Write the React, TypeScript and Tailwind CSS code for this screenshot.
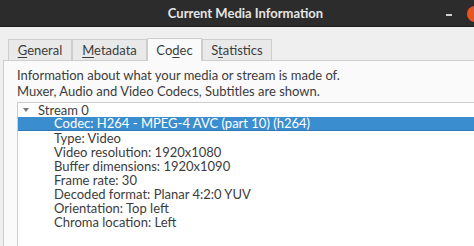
import React from "react";

const font = { fontFamily: 'Lato, "Noto Sans", "DejaVu Sans", sans-serif' };

function Tab({ label, u, w, active }: { label: string; u: number; w: number; active?: boolean }) {
  const before = label.slice(0, u);
  const ch = label[u];
  const after = label.slice(u + 1);
  return (
    <div
      className={
        active
          ? "h-[23px] border border-b-0 border-[#cdcdcd] bg-[#fafafa] flex items-center justify-center text-[#3c3c3c] relative z-10 -mb-px"
          : "h-[21px] border border-b-0 border-[#cdcdcd] bg-[#e9e9e9] flex items-center justify-center text-[#3c3c3c]"
      }
      style={{ width: w }}
    >
      <span>
        {before}
        <u className="underline-offset-2">{ch}</u>
        {after}
      </span>
    </div>
  );
}

export default function App() {
  const rows = [
    "Type: Video",
    "Video resolution: 1920x1080",
    "Buffer dimensions: 1920x1090",
    "Frame rate: 30",
    "Decoded format: Planar 4:2:0 YUV",
    "Orientation: Top left",
    "Chroma location: Left",
  ];
  return (
    <div className="w-[474px] h-[246px] overflow-hidden bg-[#efefef] text-[13px] leading-[13px]" style={font}>
      <div className="h-[27px] bg-[#2c2c2c] border-b border-[#1e1e1e] relative flex items-center justify-center">
        <span className="font-bold text-[#e4e4e4] text-[13px] ml-[17px]">Current Media Information</span>
        <div className="absolute left-[446px] top-[14px] w-[6px] h-[2px] bg-[#cfcfcf]" />
        <div className="absolute left-[467px] top-[6px] w-[16px] h-[16px] rounded-full bg-[#e95420]" />
      </div>
      <div className="pl-[3px] pt-[11px]">
        <div className="flex items-end pl-[5px] h-[22px]">
          <Tab label="General" u={0} w={64} />
          <Tab label="Metadata" u={0} w={75} />
          <Tab label="Codec" u={2} w={55} active />
          <Tab label="Statistics" u={1} w={70} />
        </div>
        <div className="border-t border-l border-[#cdcdcd] bg-[#fafafa] h-[200px] pl-[13px] pt-[6px]">
          <div className="text-[#3c3c3c] leading-[16px]">
            <div>Information about what your media or stream is made of.</div>
            <div>Muxer, Audio and Video Codecs, Subtitles are shown.</div>
          </div>
          <div className="mt-[3px] bg-white border-t border-l border-[#cdcdcd] h-[160px] text-[#3c3c3c]">
            <div className="h-[14px] flex items-center">
              <svg width="6" height="4" viewBox="0 0 6 4" className="ml-[5px] mr-[9px]">
                <path d="M0 0 L6 0 L3 4 Z" fill="#7a7a7a" />
              </svg>
              <span>Stream 0</span>
            </div>
            <div className="h-[14px] flex items-center bg-[#3a8ed0] border-b border-[#2f79b3] text-white pl-[36px]">
              Codec: H264 - MPEG-4 AVC (part 10) (h264)
            </div>
            {rows.map((r) => (
              <div key={r} className="h-[14px] flex items-center pl-[36px]">
                {r}
              </div>
            ))}
          </div>
        </div>
      </div>
    </div>
  );
}
